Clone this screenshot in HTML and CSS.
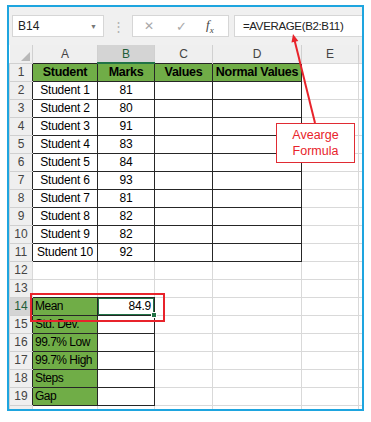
FILE: index.html
```html
<!DOCTYPE html>
<html lang="en">
<head>
    <meta charset="UTF-8">
    <title>Average Formula</title>
    <link rel="stylesheet" href="styles.css">
</head>
<body>
    <div class="window">
        <div class="formula-bar">
            <div class="name-box"><span>B14</span><span class="caret">&#9660;</span></div>
            <div class="grip">&#8942;</div>
            <div class="fx-box">
                <span class="cancel">&#10005;</span>
                <span class="enter">&#10003;</span>
                <span class="fx">f<sub>x</sub></span>
            </div>
            <div class="formula">=AVERAGE(B2:B11)</div>
        </div>

        <div class="sheet">
            <table>
                <colgroup>
                    <col style="width: 23px">
                    <col style="width: 65px">
                    <col style="width: 57px">
                    <col style="width: 58px">
                    <col style="width: 89px">
                    <col style="width: 57px">
                    <col style="width: 4px">
                </colgroup>
                <thead>
                    <tr>
                        <th class="corner"><span class="tri"></span></th>
                        <th class="col">A</th>
                        <th class="col sel">B</th>
                        <th class="col">C</th>
                        <th class="col">D</th>
                        <th class="col">E</th>
                        <th class="col"></th>
                    </tr>
                </thead>
                <tbody>
                    <tr><th class="row">1</th><td class="b g head">Student</td><td class="b g head">Marks</td><td class="b g head">Values</td><td class="b g head">Normal Values</td><td></td><td></td></tr>
                    <tr><th class="row">2</th><td class="b c">Student 1</td><td class="b c">81</td><td class="b"></td><td class="b"></td><td></td><td></td></tr>
                    <tr><th class="row">3</th><td class="b c">Student 2</td><td class="b c">80</td><td class="b"></td><td class="b"></td><td></td><td></td></tr>
                    <tr><th class="row">4</th><td class="b c">Student 3</td><td class="b c">91</td><td class="b"></td><td class="b"></td><td></td><td></td></tr>
                    <tr><th class="row">5</th><td class="b c">Student 4</td><td class="b c">83</td><td class="b"></td><td class="b"></td><td></td><td></td></tr>
                    <tr><th class="row">6</th><td class="b c">Student 5</td><td class="b c">84</td><td class="b"></td><td class="b"></td><td></td><td></td></tr>
                    <tr><th class="row">7</th><td class="b c">Student 6</td><td class="b c">93</td><td class="b"></td><td class="b"></td><td></td><td></td></tr>
                    <tr><th class="row">8</th><td class="b c">Student 7</td><td class="b c">81</td><td class="b"></td><td class="b"></td><td></td><td></td></tr>
                    <tr><th class="row">9</th><td class="b c">Student 8</td><td class="b c">82</td><td class="b"></td><td class="b"></td><td></td><td></td></tr>
                    <tr><th class="row">10</th><td class="b c">Student 9</td><td class="b c">82</td><td class="b"></td><td class="b"></td><td></td><td></td></tr>
                    <tr><th class="row">11</th><td class="b c">Student 10</td><td class="b c">92</td><td class="b"></td><td class="b"></td><td></td><td></td></tr>
                    <tr><th class="row">12</th><td></td><td></td><td></td><td></td><td></td><td></td></tr>
                    <tr><th class="row">13</th><td class="above"></td><td class="above"></td><td></td><td></td><td></td><td></td></tr>
                    <tr><th class="row sel">14</th><td class="b g label">Mean</td><td class="b num active">84.9<span class="handle"></span></td><td></td><td></td><td></td><td></td></tr>
                    <tr><th class="row">15</th><td class="b g label">Std. Dev.</td><td class="b"></td><td></td><td></td><td></td><td></td></tr>
                    <tr><th class="row">16</th><td class="b g label">99.7% Low</td><td class="b"></td><td></td><td></td><td></td><td></td></tr>
                    <tr><th class="row">17</th><td class="b g label">99.7% High</td><td class="b"></td><td></td><td></td><td></td><td></td></tr>
                    <tr><th class="row">18</th><td class="b g label">Steps</td><td class="b"></td><td></td><td></td><td></td><td></td></tr>
                    <tr><th class="row">19</th><td class="b g label">Gap</td><td class="b"></td><td></td><td></td><td></td><td></td></tr>
                    <tr><th class="row"></th><td></td><td></td><td></td><td></td><td></td><td></td></tr>
                </tbody>
            </table>
        </div>

        <!-- annotations drawn over the sheet -->
        <div class="highlight"></div>
        <svg class="arrow" width="353" height="402" viewBox="0 0 353 402">
            <line x1="306" y1="116" x2="285.5" y2="33" stroke="#e8232b" stroke-width="2"/>
            <polygon points="284,27 289.3,33.9 282.5,35.6" fill="#e8232b"/>
        </svg>
        <div class="callout">Avearge<br>Formula</div>
    </div>
</body>
</html>
```

FILE: styles.css
```css
* {
    margin: 0;
    padding: 0;
    box-sizing: border-box;
}

body {
    background: white;
    font-family: 'Liberation Sans', Arial, sans-serif;
}

.window {
    position: relative;
    width: 357px;
    height: 406px;
    margin: 5px 0 0 7px;
    border: 2px solid #1ea5df;
    background: white;
    overflow: hidden;
}

/* formula bar */

.formula-bar {
    height: 38px;
    background: #f0f0f0;
    display: flex;
    align-items: center;
    padding-left: 3px;
}

.name-box {
    width: 92px;
    height: 22px;
    background: white;
    border: 1px solid #d6d6d6;
    display: flex;
    align-items: center;
    justify-content: space-between;
    padding: 0 6px 0 5px;
    font-size: 12px;
    color: #222;
}

.caret {
    font-size: 7px;
    color: #777;
}

.grip {
    width: 28px;
    text-align: center;
    color: #b0b0b0;
    font-size: 13px;
}

.fx-box {
    width: 97px;
    height: 22px;
    background: white;
    border: 1px solid #d6d6d6;
    display: flex;
    align-items: center;
    padding-left: 11px;
    color: #a8a8a8;
}

.cancel {
    width: 32px;
    font-size: 12px;
}

.enter {
    width: 30px;
    font-size: 13px;
}

.fx {
    font-family: 'Liberation Serif', 'Times New Roman', serif;
    font-style: italic;
    font-size: 13px;
    color: #444;
}

.fx sub {
    font-size: 9px;
}

.formula {
    flex: 1;
    height: 22px;
    margin-left: 5px;
    background: white;
    border: 1px solid #d6d6d6;
    border-right: none;
    padding-left: 8px;
    font-size: 11.5px;
    letter-spacing: -0.35px;
    line-height: 20px;
    color: #222;
}

/* sheet grid */

.sheet {
    height: 364px;
    overflow: hidden;
}

table {
    border-collapse: collapse;
    table-layout: fixed;
    width: 353px;
    font-size: 12px;
}

tr {
    height: 18px;
}

th, td {
    padding: 0;
    border: 1px solid #d9d9d9;
    line-height: 16px;
    white-space: nowrap;
    overflow: hidden;
}

th {
    background: #efefef;
    color: #444;
    font-weight: normal;
    text-align: center;
}

th.col {
    border-top: none;
    border-bottom: none;
    border-color: #d0d0d0;
}

th.row {
    border-right: none;
    border-color: #d0d0d0;
}

th.corner {
    border: none;
    text-align: right;
    vertical-align: bottom;
    padding: 0 2px 2px 0;
    line-height: 0;
}

.tri {
    display: inline-block;
    width: 0;
    height: 0;
    border-left: 9px solid transparent;
    border-bottom: 9px solid #b8b8b8;
}

th.sel {
    background: #d4d4d4;
    color: #1f5e38;
}

th.col.sel {
    border-bottom: 2px solid #217346;
}

td {
    color: #000;
    padding-left: 3px;
    letter-spacing: -0.2px;
}

td.b {
    border-color: #262626;
}

td.above {
    border-bottom-color: #262626;
}

td.g {
    background: #70ad47;
}

td.head {
    font-weight: bold;
    font-size: 12.5px;
    letter-spacing: -0.3px;
    text-align: center;
    padding: 0;
}

td.label {
    letter-spacing: -0.5px;
    padding-left: 2px;
}

td.c {
    text-align: center;
    padding: 0;
}

td.num {
    text-align: right;
    padding-right: 3px;
}

td.active {
    position: relative;
    overflow: visible;
    box-shadow: inset 0 0 0 1px #217346;
}

.handle {
    position: absolute;
    right: -3px;
    bottom: -3px;
    width: 6px;
    height: 6px;
    background: #217346;
    border: 1px solid white;
}

/* annotations */

.highlight {
    position: absolute;
    left: 21px;
    top: 286px;
    width: 135px;
    height: 29px;
    border: 2px solid #e8232b;
}

.arrow {
    position: absolute;
    left: 0;
    top: 0;
}

.callout {
    position: absolute;
    left: 267px;
    top: 116px;
    width: 79px;
    height: 40px;
    border: 1px solid #e02b33;
    background: white;
    color: #e8232b;
    font-size: 12.5px;
    line-height: 16px;
    text-align: center;
    padding-top: 3px;
}
```
